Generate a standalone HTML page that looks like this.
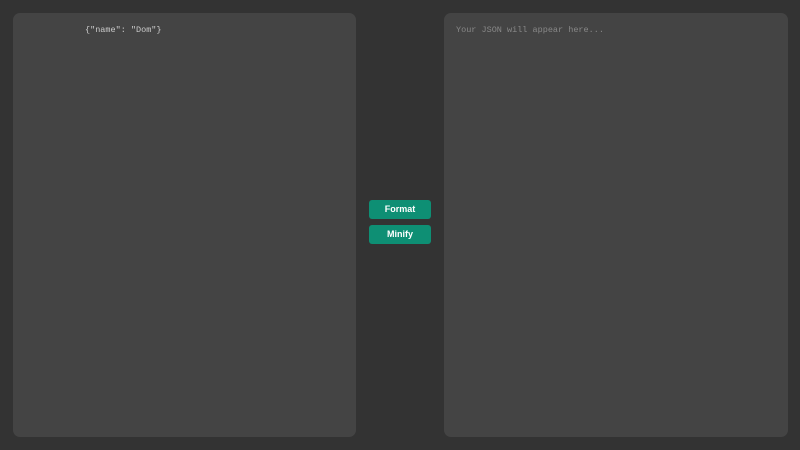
<!DOCTYPE html>
<html><head><style>
body{margin:0;width:800px;height:450px;background:#333;position:relative;overflow:hidden;}
.p{position:absolute;top:13px;height:424px;background:#444;border-radius:7px;font-family:"Liberation Mono",monospace;font-size:8.5px;}
.b{position:absolute;left:369px;width:62px;height:19px;background:#0e8f74;border-radius:3px;color:#fff;font:bold 9px "Liberation Sans",sans-serif;text-align:center;line-height:19px;}
</style></head><body>
<div class="p" style="left:13px;width:343px"><div style="position:absolute;left:72px;top:12px;color:#ccc">{"name": "Dom"}</div></div>
<div class="p" style="left:444px;width:344px"><div style="position:absolute;left:12px;top:12px;color:#888">Your JSON will appear here...</div></div>
<div class="b" style="top:200px">Format</div>
<div class="b" style="top:225px">Minify</div>
</body></html>
